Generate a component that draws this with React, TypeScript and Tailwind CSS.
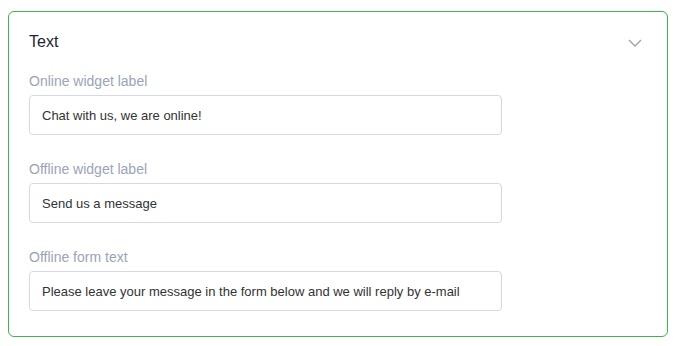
import React from 'react';

const fields = [
  { label: 'Online widget label', value: 'Chat with us, we are online!' },
  { label: 'Offline widget label', value: 'Send us a message' },
  { label: 'Offline form text', value: 'Please leave your message in the form below and we will reply by e-mail' },
];

export default function App() {
  return (
    <div className="w-[676px] h-[346px] bg-white pt-[11px] px-2 font-['Liberation_Sans',Arial,sans-serif]">
      <div className="h-[326px] border border-[#3cb54a] rounded-md bg-white px-5 pt-[18px] pb-6">
        <div className="flex items-center justify-between h-6">
          <h2 className="text-base leading-6 text-[#1e2336]">Text</h2>
          <svg width="14" height="8" viewBox="0 0 14 8" className="mr-[5px] mt-[2px]" fill="none">
            <polyline points="1,1 7,7 13,1" stroke="#9ca1ad" strokeWidth="1.3" />
          </svg>
        </div>
        <div className="mt-[17px] flex flex-col gap-6">
          {fields.map((f) => (
            <div key={f.label} className="flex flex-col gap-1">
              <label className="text-sm leading-5 text-[#9aa4b7]">{f.label}</label>
              <input
                defaultValue={f.value}
                className="w-[473px] h-10 px-3 text-[13px] text-[#333333] bg-white border border-[#d5d9e3] rounded outline-none"
              />
            </div>
          ))}
        </div>
      </div>
    </div>
  );
}
